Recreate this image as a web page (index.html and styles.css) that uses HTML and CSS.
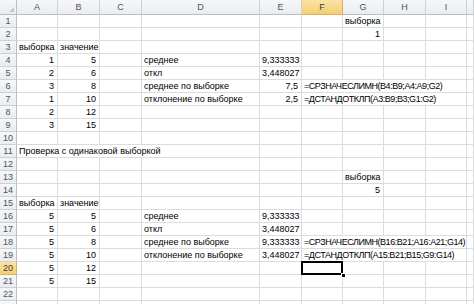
FILE: index.html
```html
<!DOCTYPE html>
<html lang="ru">
<head>
<meta charset="utf-8">
<title>Лист Excel</title>
<link rel="stylesheet" href="styles.css">
</head>
<body>
<div class="sheet">
  <div class="hd corner"><svg class="tri" width="5" height="5" viewBox="0 0 5 5"><polygon points="5,0 5,5 0,5" fill="#c3c6cb"/></svg></div>
  <div class="hd ch">A</div><div class="hd ch">B</div><div class="hd ch">C</div><div class="hd ch">D</div><div class="hd ch">E</div><div class="hd ch selh">F</div><div class="hd ch">G</div><div class="hd ch">H</div><div class="hd ch">I</div><div class="hd ch"></div>

  <div class="hd rh">1</div><div class="c"></div><div class="c"></div><div class="c"></div><div class="c"></div><div class="c"></div><div class="c"></div><div class="c">выборка</div><div class="c"></div><div class="c"></div><div class="c"></div>
  <div class="hd rh">2</div><div class="c"></div><div class="c"></div><div class="c"></div><div class="c"></div><div class="c"></div><div class="c"></div><div class="c n">1</div><div class="c"></div><div class="c"></div><div class="c"></div>
  <div class="hd rh">3</div><div class="c">выборка</div><div class="c">значение</div><div class="c"></div><div class="c"></div><div class="c"></div><div class="c"></div><div class="c"></div><div class="c"></div><div class="c"></div><div class="c"></div>
  <div class="hd rh">4</div><div class="c n">1</div><div class="c n">5</div><div class="c"></div><div class="c">среднее</div><div class="c n">9,333333</div><div class="c"></div><div class="c"></div><div class="c"></div><div class="c"></div><div class="c"></div>
  <div class="hd rh">5</div><div class="c n">2</div><div class="c n">6</div><div class="c"></div><div class="c">откл</div><div class="c n">3,448027</div><div class="c"></div><div class="c"></div><div class="c"></div><div class="c"></div><div class="c"></div>
  <div class="hd rh">6</div><div class="c n">3</div><div class="c n">8</div><div class="c"></div><div class="c">среднее по выборке</div><div class="c n">7,5</div><div class="c s4 f">=СРЗНАЧЕСЛИМН(B4:B9;A4:A9;G2)</div><div class="c"></div>
  <div class="hd rh">7</div><div class="c n">1</div><div class="c n">10</div><div class="c"></div><div class="c">отклонение по выборке</div><div class="c n">2,5</div><div class="c s4 f">=ДСТАНДОТКЛП(A3:B9;B3;G1:G2)</div><div class="c"></div>
  <div class="hd rh">8</div><div class="c n">2</div><div class="c n">12</div><div class="c"></div><div class="c"></div><div class="c"></div><div class="c"></div><div class="c"></div><div class="c"></div><div class="c"></div><div class="c"></div>
  <div class="hd rh">9</div><div class="c n">3</div><div class="c n">15</div><div class="c"></div><div class="c"></div><div class="c"></div><div class="c"></div><div class="c"></div><div class="c"></div><div class="c"></div><div class="c"></div>
  <div class="hd rh">10</div><div class="c"></div><div class="c"></div><div class="c"></div><div class="c"></div><div class="c"></div><div class="c"></div><div class="c"></div><div class="c"></div><div class="c"></div><div class="c"></div>
  <div class="hd rh">11</div><div class="c s4">Проверка с одинаковой выборкой</div><div class="c"></div><div class="c"></div><div class="c"></div><div class="c"></div><div class="c"></div><div class="c"></div>
  <div class="hd rh">12</div><div class="c"></div><div class="c"></div><div class="c"></div><div class="c"></div><div class="c"></div><div class="c"></div><div class="c"></div><div class="c"></div><div class="c"></div><div class="c"></div>
  <div class="hd rh">13</div><div class="c"></div><div class="c"></div><div class="c"></div><div class="c"></div><div class="c"></div><div class="c"></div><div class="c">выборка</div><div class="c"></div><div class="c"></div><div class="c"></div>
  <div class="hd rh">14</div><div class="c"></div><div class="c"></div><div class="c"></div><div class="c"></div><div class="c"></div><div class="c"></div><div class="c n">5</div><div class="c"></div><div class="c"></div><div class="c"></div>
  <div class="hd rh">15</div><div class="c">выборка</div><div class="c">значение</div><div class="c"></div><div class="c"></div><div class="c"></div><div class="c"></div><div class="c"></div><div class="c"></div><div class="c"></div><div class="c"></div>
  <div class="hd rh">16</div><div class="c n">5</div><div class="c n">5</div><div class="c"></div><div class="c">среднее</div><div class="c n">9,333333</div><div class="c"></div><div class="c"></div><div class="c"></div><div class="c"></div><div class="c"></div>
  <div class="hd rh">17</div><div class="c n">5</div><div class="c n">6</div><div class="c"></div><div class="c">откл</div><div class="c n">3,448027</div><div class="c"></div><div class="c"></div><div class="c"></div><div class="c"></div><div class="c"></div>
  <div class="hd rh">18</div><div class="c n">5</div><div class="c n">8</div><div class="c"></div><div class="c">среднее по выборке</div><div class="c n">9,333333</div><div class="c s4 f">=СРЗНАЧЕСЛИМН(B16:B21;A16:A21;G14)</div><div class="c"></div>
  <div class="hd rh">19</div><div class="c n">5</div><div class="c n">10</div><div class="c"></div><div class="c">отклонение по выборке</div><div class="c n">3,448027</div><div class="c s4 f">=ДСТАНДОТКЛП(A15:B21;B15;G9:G14)</div><div class="c"></div>
  <div class="hd rh selh">20</div><div class="c n">5</div><div class="c n">12</div><div class="c"></div><div class="c"></div><div class="c"></div><div class="c active"></div><div class="c"></div><div class="c"></div><div class="c"></div><div class="c"></div>
  <div class="hd rh">21</div><div class="c n">5</div><div class="c n">15</div><div class="c"></div><div class="c"></div><div class="c"></div><div class="c"></div><div class="c"></div><div class="c"></div><div class="c"></div><div class="c"></div>
  <div class="hd rh">22</div><div class="c"></div><div class="c"></div><div class="c"></div><div class="c"></div><div class="c"></div><div class="c"></div><div class="c"></div><div class="c"></div><div class="c"></div><div class="c"></div>
  <div class="hd rh"></div><div class="c"></div><div class="c"></div><div class="c"></div><div class="c"></div><div class="c"></div><div class="c"></div><div class="c"></div><div class="c"></div><div class="c"></div><div class="c"></div>
</div>
</body>
</html>
```

FILE: styles.css
```css
html, body {
  margin: 0;
  padding: 0;
  background: #ffffff;
  overflow: hidden;
}

.sheet {
  display: grid;
  grid-template-columns: 17px 41px 42px 42px 118px 42px 41px 41px 42px 41px 1fr;
  grid-template-rows: 15px repeat(23, 13px);
  width: 474px;
  height: 304px;
  overflow: hidden;
  font-family: "Liberation Sans", Arial, sans-serif;
  font-size: 9px;
  color: #000000;
}

.c {
  box-sizing: border-box;
  border-right: 1px solid #dadcdd;
  border-bottom: 1px solid #dadcdd;
  line-height: 13px;
  padding: 0 2px 0 2px;
  white-space: nowrap;
  overflow: hidden;
}

.n {
  text-align: right;
  padding-right: 3px;
}

.s4 {
  grid-column: span 4;
}

.f {
  letter-spacing: -0.45px;
}

.hd {
  box-sizing: border-box;
  background: linear-gradient(#f6f7f8, #eaecef);
  color: #4b5563;
  text-align: center;
  white-space: nowrap;
  overflow: hidden;
}

.ch {
  border-right: 1px solid #cdd1d6;
  border-bottom: 1px solid #b9bfc7;
  line-height: 15px;
}

.rh {
  border-right: 1px solid #b9bfc7;
  border-bottom: 1px solid #cdd1d6;
  line-height: 13px;
}

.corner {
  position: relative;
  border-right: 1px solid #b9bfc7;
  border-bottom: 1px solid #b9bfc7;
}

.tri {
  position: absolute;
  right: 2px;
  bottom: 2px;
  display: block;
}

.selh {
  background: linear-gradient(#fbe3a6, #f4cf74);
  color: #3a3a3a;
  border-right-color: #d9b15a;
  border-bottom-color: #d9b15a;
}

.active {
  position: relative;
  overflow: visible;
}

.active::after {
  content: "";
  position: absolute;
  left: -1px;
  top: -1px;
  right: -1px;
  bottom: -1px;
  border: 2px solid #000000;
}

.active::before {
  content: "";
  position: absolute;
  right: -4px;
  bottom: -4px;
  width: 5px;
  height: 5px;
  background: #000000;
  border: 1px solid #ffffff;
  box-sizing: border-box;
  z-index: 2;
}
```
